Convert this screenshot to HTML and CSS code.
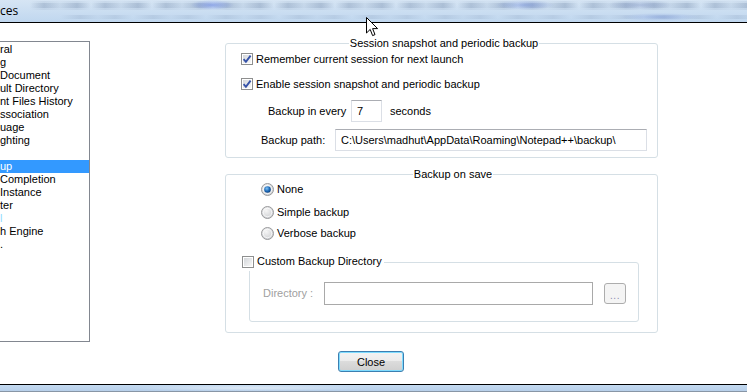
FILE: index.html
```html
<!DOCTYPE html>
<html lang="en">
<head>
  <meta charset="UTF-8" />
  <title>Preferences - Backup</title>
  <link rel="stylesheet" href="styles.css">
</head>
<body>

  <svg class="defs" width="0" height="0">
    <defs>
      <linearGradient id="boxfill" x1="0" y1="0" x2="1" y2="1">
        <stop offset="0" stop-color="#d3d6da"/>
        <stop offset="1" stop-color="#f8f8f8"/>
      </linearGradient>
      <radialGradient id="radiofill" cx="0.4" cy="0.35" r="0.7">
        <stop offset="0" stop-color="#f6f6f6"/>
        <stop offset="1" stop-color="#c9cbcf"/>
      </radialGradient>
      <radialGradient id="dotfill" cx="0.4" cy="0.35" r="0.7">
        <stop offset="0" stop-color="#7fc3f5"/>
        <stop offset="0.6" stop-color="#1d68b6"/>
        <stop offset="1" stop-color="#0c3f7c"/>
      </radialGradient>
      <symbol id="checkbox" viewBox="0 0 12 12">
        <rect x="0.5" y="0.5" width="11" height="11" fill="#fff" stroke="#8e8f8f"/>
        <rect x="2" y="2" width="8" height="8" fill="url(#boxfill)"/>
      </symbol>
      <symbol id="tick" viewBox="0 0 12 12">
        <path d="M2.6 6.2 L4.9 8.8 L9.6 2.6" fill="none" stroke="#3552a8" stroke-width="1.9"/>
      </symbol>
      <symbol id="radio" viewBox="0 0 13 13">
        <circle cx="6.5" cy="6.5" r="6" fill="url(#radiofill)" stroke="#9a9b9d"/>
        <circle cx="6.5" cy="6.5" r="4.2" fill="none" stroke="#fff" stroke-opacity="0.7"/>
      </symbol>
    </defs>
  </svg>

  <div class="titlebar"><span class="title">ces</span></div>

  <div class="main">
    <ul class="pages">
      <li>ral</li>
      <li>g</li>
      <li>Document</li>
      <li>ult Directory</li>
      <li>nt Files History</li>
      <li>ssociation</li>
      <li>uage</li>
      <li>ghting</li>
      <li></li>
      <li class="selected">up</li>
      <li>Completion</li>
      <li>Instance</li>
      <li>ter</li>
      <li class="faint">l</li>
      <li>h Engine</li>
      <li>.</li>
    </ul>

    <div class="panel">
      <fieldset class="group group-session">
        <legend>Session snapshot and periodic backup</legend>
        <label class="row row-check">
          <svg class="check" width="12" height="12"><use href="#checkbox"/><use href="#tick"/></svg>
          Remember current session for next launch
        </label>
        <label class="row row-check second">
          <svg class="check" width="12" height="12"><use href="#checkbox"/><use href="#tick"/></svg>
          Enable session snapshot and periodic backup
        </label>
        <div class="row row-every">
          <span class="lbl">Backup in every</span>
          <input class="field field-num" type="text" value="7">
          <span class="unit">seconds</span>
        </div>
        <div class="row row-path">
          <span class="lbl">Backup path:</span>
          <input class="field field-path" type="text" value="C:\Users\madhut\AppData\Roaming\Notepad++\backup\">
        </div>
      </fieldset>

      <fieldset class="group group-save">
        <legend>Backup on save</legend>
        <label class="row radio-row">
          <svg class="radio" width="13" height="13"><use href="#radio"/><circle cx="6.5" cy="6.5" r="3.3" fill="url(#dotfill)"/></svg>
          None
        </label>
        <label class="row radio-row second">
          <svg class="radio" width="13" height="13"><use href="#radio"/></svg>
          Simple backup
        </label>
        <label class="row radio-row third">
          <svg class="radio" width="13" height="13"><use href="#radio"/></svg>
          Verbose backup
        </label>

        <fieldset class="group-custom">
          <legend>
            <span class="legend-check">
              <svg class="check" width="12" height="12"><use href="#checkbox"/></svg>
              Custom Backup Directory
            </span>
          </legend>
          <div class="row row-dir">
            <span class="lbl disabled">Directory :</span>
            <input class="field field-dir" type="text" disabled>
            <button class="btn-browse" disabled>...</button>
          </div>
        </fieldset>
      </fieldset>
    </div>
  </div>

  <div class="footer">
    <button class="btn-close">Close</button>
  </div>

  <div class="taskbar"></div>

  <svg class="cursor" width="13" height="20" viewBox="0 0 13 20">
    <path d="M0.5 0.5 L0.5 16 L4.2 12.4 L6.6 18.6 L9 17.6 L6.6 11.6 L11.6 11.6 Z" fill="#fff" stroke="#000" stroke-linejoin="miter"/>
  </svg>

</body>
</html>
```

FILE: styles.css
```css
body {
  margin: 0;
  width: 747px;
  height: 392px;
  display: flex;
  flex-direction: column;
  background: #fff;
  font-family: "Liberation Sans", Arial, sans-serif;
  font-size: 11px;
  color: #000;
  overflow: hidden;
}
.defs {
  flex: none;
  overflow: hidden;
}

/* Barre de titre floutée */
.titlebar {
  flex: none;
  height: 22px;
  border-bottom: 1px solid #000;
  background:
    radial-gradient(ellipse 22px 5px at 212px 5px, rgba(80, 110, 220, 0.5), transparent),
    radial-gradient(ellipse 30px 5px at 525px 5px, rgba(90, 120, 210, 0.4), transparent),
    radial-gradient(ellipse 34px 5px at 640px 5px, rgba(120, 140, 190, 0.4), transparent),
    radial-gradient(ellipse 40px 4px at 660px 17px, rgba(100, 130, 210, 0.35), transparent),
    repeating-linear-gradient(90deg, rgba(115, 138, 170, 0) 0, rgba(115, 138, 170, 0.28) 14px, rgba(115, 138, 170, 0.08) 30px, rgba(115, 138, 170, 0.3) 47px, rgba(115, 138, 170, 0) 61px) 30px 3px / 100% 5px no-repeat,
    repeating-linear-gradient(90deg, rgba(115, 138, 170, 0) 0, rgba(115, 138, 170, 0.14) 14px, rgba(115, 138, 170, 0.04) 30px, rgba(115, 138, 170, 0.15) 47px, rgba(115, 138, 170, 0) 61px) 30px 1px / 100% 9px no-repeat,
    repeating-linear-gradient(90deg, rgba(125, 148, 180, 0) 0, rgba(125, 148, 180, 0.22) 20px, rgba(125, 148, 180, 0.05) 38px, rgba(125, 148, 180, 0.2) 55px, rgba(125, 148, 180, 0) 73px) 60px 15px / 100% 4px no-repeat,
    linear-gradient(#d6e5f4, #c0d7ef);
}
.title {
  font-family: "Open Sans", sans-serif;
  font-size: 12px;
  line-height: 22px;
}

.main {
  flex: none;
  display: flex;
  align-items: flex-start;
}

/* Liste des pages */
.pages {
  list-style: none;
  box-sizing: border-box;
  margin: 18px 0 0;
  padding: 1px 0 0;
  width: 90px;
  height: 301px;
  border: 1px solid #828790;
  border-left: none;
}
.pages li {
  height: 13px;
  line-height: 13px;
  white-space: nowrap;
  overflow: hidden;
}
.pages li.selected {
  background: #3399ff;
  color: #fff;
}
.pages li.faint {
  color: #8fdcff;
}

.panel {
  margin: 14px 0 0 135px;
  width: 433px;
  display: flex;
  flex-direction: column;
}

.group {
  margin: 0;
  min-width: 0;
  border: 1px solid #d5dfe5;
  border-radius: 3px;
}
.group > legend {
  margin: 0 auto;
  padding: 0 1px;
  line-height: 13px;
}

.row {
  display: flex;
  align-items: center;
}
.check, .radio {
  flex: none;
  display: block;
}

/* Groupe session */
.group-session {
  padding: 1px 10px 6px 15px;
}
.row-check {
  height: 16px;
}
.row-check .check {
  margin-right: 3px;
}
.row-check.second {
  margin-top: 9px;
}
.row-every {
  margin-top: 8px;
  height: 22px;
  padding-left: 27px;
}
.row-every .lbl {
  width: 83px;
}
.unit {
  margin-left: 8px;
}
.row-path {
  margin-top: 7px;
  height: 22px;
  padding-left: 20px;
}
.row-path .lbl {
  width: 74px;
}

.field {
  box-sizing: border-box;
  height: 22px;
  margin: 0;
  padding: 0 0 0 5px;
  font-family: inherit;
  font-size: 11px;
  color: #000;
  background: #fff;
  border: 1px solid #dbdfe6;
  border-top-color: #abadb3;
  outline: none;
}
.field-num {
  width: 31px;
}
.field-path {
  width: 312px;
}

/* Groupe sauvegarde */
.group-save {
  margin-top: 10px;
  padding: 1px 0 10px 23px;
}
.radio-row {
  height: 14px;
  margin-left: 12px;
}
.radio-row .radio {
  margin-right: 3px;
}
.radio-row.second {
  margin-top: 9px;
}
.radio-row.third {
  margin-top: 7px;
}

.group-custom {
  margin: 15px 18px 0 0;
  padding: 11px 0 16px 0;
  min-width: 0;
  border: 1px solid #d5dfe5;
  border-radius: 3px;
}
.group-custom legend {
  margin-left: -8px;
  padding: 0 2px 0 0;
  line-height: 13px;
}
.legend-check {
  display: inline-flex;
  align-items: center;
  height: 13px;
}
.legend-check .check {
  margin-right: 3px;
}
.row-dir {
  height: 23px;
  padding-left: 13px;
}
.row-dir .lbl {
  width: 61px;
}
.disabled {
  color: #a0a0a0;
}
.field-dir {
  width: 269px;
  height: 23px;
  border: 1px solid #a9a9a9;
}
.btn-browse {
  box-sizing: border-box;
  width: 22px;
  height: 21px;
  margin: 0 0 0 11px;
  padding: 4px 0 0;
  font-family: inherit;
  font-size: 10px;
  letter-spacing: 0.5px;
  color: #8c8ab0;
  background: #f4f4f4;
  border: 1px solid #adadad;
  border-radius: 3px;
}

/* Bouton Fermer */
.footer {
  flex: none;
  display: flex;
  justify-content: center;
  padding-right: 5px;
  margin-top: 9px;
}
.btn-close {
  box-sizing: border-box;
  width: 66px;
  height: 21px;
  padding: 0;
  font-family: inherit;
  font-size: 11px;
  color: #000;
  border: 1px solid #3c7fb1;
  border-radius: 3px;
  box-shadow: inset 0 0 0 1px #7fdcff;
  background: linear-gradient(#f3f3f3 0%, #ebebeb 50%, #dcdcdc 50%, #cfcfcf 100%);
}

.taskbar {
  flex: none;
  margin-top: auto;
  height: 7px;
  border-top: 1px solid #000;
  background:
    radial-gradient(ellipse 120px 3px at 250px 3px, rgba(255, 255, 255, 0.5), transparent),
    linear-gradient(#c4daf1, #b8d0ea 80%, #6e7680 100%);
}

.cursor {
  position: absolute;
  left: 366px;
  top: 17px;
}
```
